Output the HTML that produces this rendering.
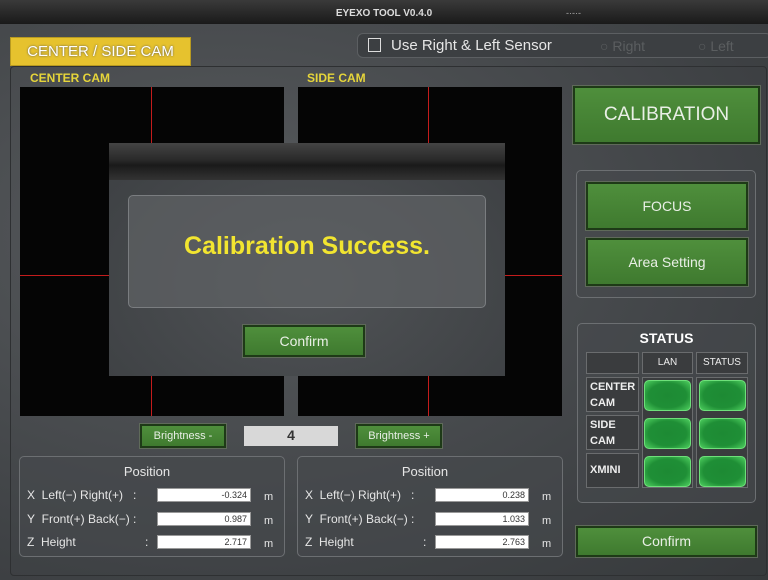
<!DOCTYPE html>
<html><head><style>
*{margin:0;padding:0;box-sizing:border-box}
body{width:768px;height:580px;overflow:hidden;position:relative;font-family:"Liberation Sans",sans-serif;background:radial-gradient(ellipse at 30% 40%,#585b5e,#3f4245 70%,#36393b);}
.a{position:absolute}
.btn{position:absolute;background:linear-gradient(#4f8f3c,#3f7a2f);border:2px solid #1e3a17;box-shadow:0 0 0 1px #5f6a5a;color:#e9efe6;text-align:center;font-family:"Liberation Sans",sans-serif}
.cam{position:absolute;background:#050505}
.pan{position:absolute;border:1px solid #6c6f72;border-radius:5px;background:rgba(70,73,76,.6)}
.lbl{position:absolute;color:#e6e6e6;font-size:12px}
.in{position:absolute;background:#fff;border:1px solid #999;font-size:9px;color:#333;text-align:right;padding-right:3px;line-height:13px;height:14px;width:94px}
.g{position:absolute;background:radial-gradient(#1d8a34,#1f8f36 60%,#4fd060);border-radius:5px;border:1px solid #6ee07a}
.c{position:absolute;background:#3a3c3e;border:1px solid #6a6c6e;color:#eee;font-size:11px;font-weight:bold}
.r{position:absolute;background:#c41c1c}
</style></head><body>
<div class="a" style="left:0;top:0;width:768px;height:24px;background:linear-gradient(#3a3a3a,#1a1a1a);"></div>
<div class="a" style="left:0;top:8px;width:768px;text-align:center;color:#ddd;font-size:10px;font-weight:bold;">EYEXO TOOL V0.4.0</div>
<div class="a" style="left:566px;top:8px;color:#aaa;font-size:9px">-·-·-</div>
<div class="a" style="left:10px;top:37px;width:181px;height:29px;background:#e6c22e;border:1px solid #b89a20;color:#fff;font-size:15px;text-align:center;line-height:27px;text-shadow:0 0 2px #555">CENTER / SIDE CAM</div>
<div class="a" style="left:357px;top:33px;width:415px;height:25px;background:#3c3f42;border:1px solid #5c5f62;border-radius:6px"></div>
<div class="a" style="left:368px;top:38px;width:13px;height:14px;border:1px solid #ddd;"></div>
<div class="a" style="left:391px;top:37px;color:#e6e6e6;font-size:15px">Use Right &amp; Left Sensor</div>
<div class="a" style="left:600px;top:38px;color:#5b5e60;font-size:14px">○ Right</div>
<div class="a" style="left:698px;top:38px;color:#5b5e60;font-size:14px">○ Left</div>
<div class="a" style="left:10px;top:66px;width:757px;height:510px;border:1px solid #2e3032;border-radius:4px"></div>
<div class="a" style="left:30px;top:71px;color:#e6d53a;font-size:12px;font-weight:bold">CENTER CAM</div>
<div class="a" style="left:307px;top:71px;color:#e6d53a;font-size:12px;font-weight:bold">SIDE CAM</div>
<div class="cam" style="left:20px;top:87px;width:264px;height:329px"></div>
<div class="cam" style="left:298px;top:87px;width:264px;height:329px"></div>
<div class="r" style="left:151px;top:87px;width:1px;height:329px"></div>
<div class="r" style="left:428px;top:87px;width:1px;height:329px"></div>
<div class="r" style="left:20px;top:275px;width:264px;height:1px"></div>
<div class="r" style="left:298px;top:275px;width:264px;height:1px"></div>
<!-- dialog -->
<div class="a" style="left:109px;top:143px;width:396px;height:233px;background:radial-gradient(ellipse at 50% 60%,#505356,#3c3f42);"></div>
<div class="a" style="left:109px;top:143px;width:396px;height:37px;background:linear-gradient(#444,#2a2a2a 45%,#1a1a1a 60%,#333);"></div>
<div class="a" style="left:128px;top:195px;width:358px;height:113px;background:rgba(95,98,101,.7);border:1px solid #7a7d80;border-radius:5px"></div>
<div class="a" style="left:128px;top:232px;width:358px;text-align:center;color:#f2e530;font-size:25px;font-weight:bold;">Calibration Success.</div>
<div class="btn" style="left:243px;top:325px;width:122px;height:32px;font-size:14px;line-height:28px">Confirm</div>
<!-- right -->
<div class="btn" style="left:573px;top:86px;width:187px;height:58px;font-size:19px;line-height:54px">CALIBRATION</div>
<div class="pan" style="left:576px;top:170px;width:180px;height:128px"></div>
<div class="btn" style="left:586px;top:182px;width:162px;height:48px;font-size:14px;line-height:44px">FOCUS</div>
<div class="btn" style="left:586px;top:238px;width:162px;height:48px;font-size:14px;line-height:44px">Area Setting</div>
<div class="pan" style="left:577px;top:323px;width:179px;height:180px"></div>
<div class="a" style="left:577px;top:330px;width:179px;text-align:center;color:#fff;font-size:14px;font-weight:bold">STATUS</div>
<div class="c" style="left:586px;top:352px;width:53px;height:22px"></div>
<div class="c" style="left:642px;top:352px;width:51px;height:22px;font-weight:normal;font-size:10px;text-align:center;line-height:20px">LAN</div>
<div class="c" style="left:696px;top:352px;width:52px;height:22px;font-weight:normal;font-size:10px;text-align:center;line-height:20px">STATUS</div>
<div class="c" style="left:586px;top:377px;width:53px;height:35px;padding:1px 3px;line-height:16px">CENTER<br>CAM</div>
<div class="c" style="left:586px;top:415px;width:53px;height:35px;padding:1px 3px;line-height:16px">SIDE<br>CAM</div>
<div class="c" style="left:586px;top:453px;width:53px;height:35px;padding:0 3px;line-height:33px">XMINI</div>
<div class="c" style="left:642px;top:377px;width:51px;height:111px"></div>
<div class="c" style="left:696px;top:377px;width:52px;height:111px"></div>
<div class="g" style="left:644px;top:380px;width:47px;height:31px"></div>
<div class="g" style="left:699px;top:380px;width:47px;height:31px"></div>
<div class="g" style="left:644px;top:418px;width:47px;height:31px"></div>
<div class="g" style="left:699px;top:418px;width:47px;height:31px"></div>
<div class="g" style="left:644px;top:456px;width:47px;height:31px"></div>
<div class="g" style="left:699px;top:456px;width:47px;height:31px"></div>
<div class="btn" style="left:576px;top:526px;width:181px;height:31px;font-size:14px;line-height:27px">Confirm</div>
<!-- brightness -->
<div class="btn" style="left:140px;top:424px;width:86px;height:24px;font-size:11px;line-height:20px">Brightness -</div>
<div class="a" style="left:244px;top:426px;width:94px;height:20px;background:#d8d8d8;color:#333;font-size:14px;font-weight:bold;text-align:center;line-height:19px">4</div>
<div class="btn" style="left:356px;top:424px;width:86px;height:24px;font-size:11px;line-height:20px">Brightness +</div>
<!-- position panels -->
<div class="pan" style="left:19px;top:456px;width:266px;height:101px"></div>
<div class="pan" style="left:297px;top:456px;width:266px;height:101px"></div>
<div class="lbl" style="left:19px;top:464px;width:256px;text-align:center;font-size:13px">Position</div>
<div class="lbl" style="left:297px;top:464px;width:256px;text-align:center;font-size:13px">Position</div>
<div class="lbl" style="left:27px;top:488px">X&nbsp; Left(−) Right(+)&nbsp;&nbsp; :</div>
<div class="lbl" style="left:27px;top:512px">Y&nbsp; Front(+) Back(−) :</div>
<div class="lbl" style="left:27px;top:535px">Z&nbsp; Height</div><div class="lbl" style="left:145px;top:535px">:</div>
<div class="in" style="left:157px;top:488px">-0.324</div>
<div class="in" style="left:157px;top:512px">0.987</div>
<div class="in" style="left:157px;top:535px">2.717</div>
<div class="lbl" style="left:264px;top:491px;font-size:11px">m</div>
<div class="lbl" style="left:264px;top:515px;font-size:11px">m</div>
<div class="lbl" style="left:264px;top:538px;font-size:11px">m</div>
<div class="lbl" style="left:305px;top:488px">X&nbsp; Left(−) Right(+)&nbsp;&nbsp; :</div>
<div class="lbl" style="left:305px;top:512px">Y&nbsp; Front(+) Back(−) :</div>
<div class="lbl" style="left:305px;top:535px">Z&nbsp; Height</div><div class="lbl" style="left:423px;top:535px">:</div>
<div class="in" style="left:435px;top:488px">0.238</div>
<div class="in" style="left:435px;top:512px">1.033</div>
<div class="in" style="left:435px;top:535px">2.763</div>
<div class="lbl" style="left:542px;top:491px;font-size:11px">m</div>
<div class="lbl" style="left:542px;top:515px;font-size:11px">m</div>
<div class="lbl" style="left:542px;top:538px;font-size:11px">m</div>
</body></html>
